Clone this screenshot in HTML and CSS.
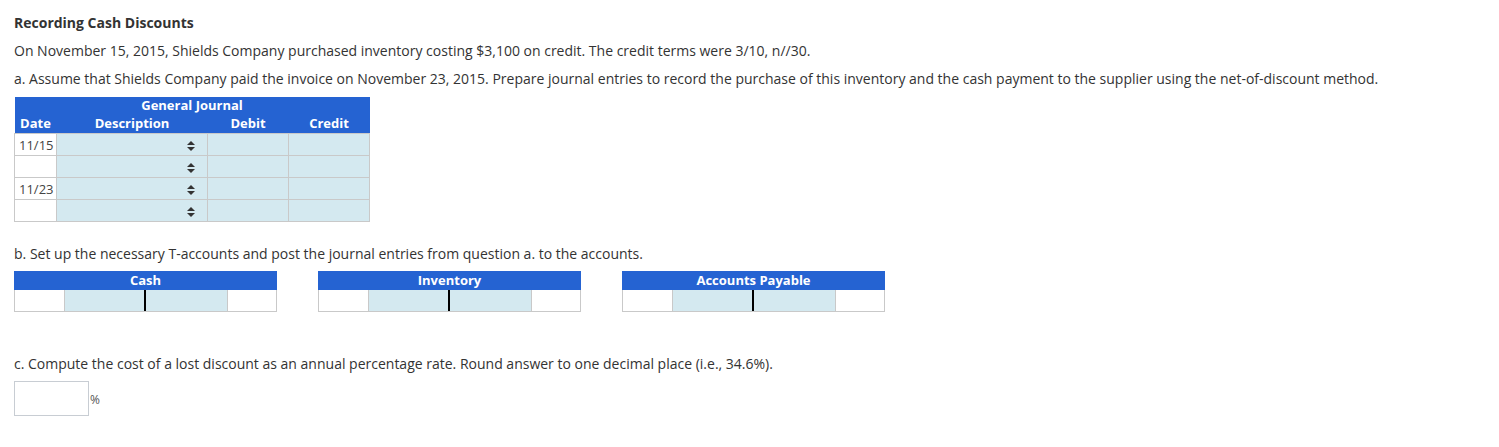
FILE: index.html
```html
<!DOCTYPE html>
<html>
<head>
<meta charset="utf-8">
<link rel="stylesheet" href="styles.css">
</head>
<body>
<h1 class="title">Recording Cash Discounts</h1>
<p class="para">On November 15, 2015, Shields Company purchased inventory costing $3,100 on credit. The credit terms were 3/10, n//30.</p>
<p class="para">a. Assume that Shields Company paid the invoice on November 23, 2015. Prepare journal entries to record the purchase of this inventory and the cash payment to the supplier using the net-of-discount method.</p>

<table class="journal">
  <colgroup><col class="c-date"><col class="c-desc"><col class="c-amt"><col class="c-amt"></colgroup>
  <thead>
    <tr class="hrow1"><th colspan="4">General Journal</th></tr>
    <tr class="hrow2"><th>Date</th><th>Description</th><th>Debit</th><th>Credit</th></tr>
  </thead>
  <tbody>
    <tr><td class="date">11/15</td><td class="desc"><span class="sel"><svg width="8" height="10" viewBox="0 0 8 10"><path d="M4 0 L8 4 L0 4 Z M0 6 L8 6 L4 10 Z" fill="#333"/></svg></span></td><td class="amt"></td><td class="amt"></td></tr>
    <tr><td class="date"></td><td class="desc"><span class="sel"><svg width="8" height="10" viewBox="0 0 8 10"><path d="M4 0 L8 4 L0 4 Z M0 6 L8 6 L4 10 Z" fill="#333"/></svg></span></td><td class="amt"></td><td class="amt"></td></tr>
    <tr><td class="date">11/23</td><td class="desc"><span class="sel"><svg width="8" height="10" viewBox="0 0 8 10"><path d="M4 0 L8 4 L0 4 Z M0 6 L8 6 L4 10 Z" fill="#333"/></svg></span></td><td class="amt"></td><td class="amt"></td></tr>
    <tr><td class="date"></td><td class="desc"><span class="sel"><svg width="8" height="10" viewBox="0 0 8 10"><path d="M4 0 L8 4 L0 4 Z M0 6 L8 6 L4 10 Z" fill="#333"/></svg></span></td><td class="amt"></td><td class="amt"></td></tr>
  </tbody>
</table>

<p class="para para-b">b. Set up the necessary T-accounts and post the journal entries from question a. to the accounts.</p>

<div class="taccounts">
  <div class="tacc">
    <div class="tacc-head">Cash</div>
    <div class="tacc-body"><div class="cell white"></div><div class="cell blue left"></div><div class="cell blue"></div><div class="cell white"></div></div>
  </div>
  <div class="tacc">
    <div class="tacc-head">Inventory</div>
    <div class="tacc-body"><div class="cell white"></div><div class="cell blue left"></div><div class="cell blue"></div><div class="cell white"></div></div>
  </div>
  <div class="tacc">
    <div class="tacc-head">Accounts Payable</div>
    <div class="tacc-body"><div class="cell white"></div><div class="cell blue left"></div><div class="cell blue"></div><div class="cell white"></div></div>
  </div>
</div>

<p class="para para-c">c. Compute the cost of a lost discount as an annual percentage rate. Round answer to one decimal place (i.e., 34.6%).</p>

<div class="answer"><div class="inputbox"></div><span class="pct">%</span></div>
</body>
</html>
```

FILE: styles.css
```css
html, body {
  margin: 0;
  background: #fff;
}
body {
  padding: 13px 14px;
  font-family: "Open Sans", "Liberation Sans", sans-serif;
  font-size: 14px;
  color: #333;
}
.title {
  margin: 0;
  font-size: 14px;
  font-weight: 700;
  line-height: 20px;
}
.para {
  margin: 8px 0 0;
  line-height: 20px;
}
.journal {
  margin-top: 8px;
  border-collapse: collapse;
  table-layout: fixed;
  width: 355px;
}
.c-date { width: 42px; }
.c-desc { width: 151px; }
.c-amt { width: 81px; }
.journal th {
  background: #2563d2;
  color: #fff;
  font-size: 13px;
  font-weight: 700;
  padding: 0;
  text-align: center;
}
.hrow1 th {
  height: 17px;
  line-height: 17px;
}
.hrow2 th {
  height: 18px;
  line-height: 19px;
  vertical-align: top;
}
.journal td {
  border: 1px solid #c9c9c9;
  height: 21px;
  padding: 0;
}
.journal td.date {
  background: #fff;
  padding-left: 4px;
  font-size: 13px;
  color: #444;
}
.journal td.desc,
.journal td.amt {
  background: #d4e9f0;
}
.desc {
  text-align: right;
}
.sel {
  display: inline-flex;
  margin-right: 12px;
  vertical-align: middle;
}
.para-b {
  margin-top: 22px;
}
.taccounts {
  display: flex;
  gap: 41px;
  margin-top: 7px;
}
.tacc {
  width: 263px;
}
.tacc-head {
  background: #2563d2;
  color: #fff;
  font-size: 13px;
  font-weight: 700;
  text-align: center;
  height: 19px;
  line-height: 19px;
}
.tacc-body {
  display: grid;
  grid-template-columns: 49px 82px 81px 49px;
  height: 22px;
  width: 263px;
  box-sizing: border-box;
  border: 1px solid #c9c9c9;
  border-top: none;
}
.cell.white { background: #fff; }
.cell.blue { background: #d4e9f0; }
.cell:nth-child(2) { border-left: 1px solid #c9c9c9; }
.cell:nth-child(4) { border-left: 1px solid #c9c9c9; }
.cell.left { border-right: 2px solid #000; }
.para-c {
  margin-top: 42px;
}
.answer {
  display: flex;
  align-items: flex-end;
  margin-top: 7px;
}
.inputbox {
  width: 75px;
  height: 35px;
  box-sizing: border-box;
  border: 1px solid #c8cdd3;
  background: #fff;
}
.pct {
  font-size: 12px;
  color: #555;
  margin-left: 1px;
  margin-bottom: 9px;
  line-height: 14px;
}
```
